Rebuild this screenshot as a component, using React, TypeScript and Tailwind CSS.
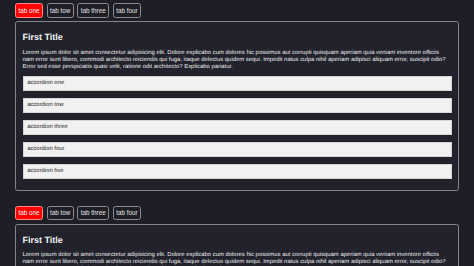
import React, { useState } from "react";

const tabs = ["tab one", "tab tow", "tab three", "tab four"];
const items = ["accordion one", "accordion tow", "accordion three", "accordion four", "accordion five"];

const lorem =
  "Lorem ipsum dolor sit amet consectetur adipisicing elit. Dolore explicabo cum dolores hic possimus aut corrupti quisquam aperiam quia veniam inventore officiis nam error sunt libero, commodi architecto reiciendis qui fuga, itaque delectus quidem sequi. Impedit natus culpa nihil aperiam adipisci aliquam error, suscipit odio? Error sed esse perspiciatis quasi velit, ratione odit architecto? Explicabo pariatur.";

const TabBlock: React.FC = () => {
  const [active, setActive] = useState(0);
  const [open, setOpen] = useState<number | null>(null);

  return (
    <div className="mb-[15px]">
      {/* tabs */}
      <div className="flex gap-[3.5px]">
        {tabs.map((t, i) => (
          <button
            key={t}
            onClick={() => setActive(i)}
            className={`rounded-[2.5px] border px-[2.5px] py-[2.6px] text-[6.3px] leading-[1.15] ${
              i === active
                ? "border-[#ff8a8a] bg-[#ff0000] text-[#f4f4f4]"
                : "border-[#8a8a90] bg-transparent text-[#e0e0e0]"
            }`}
          >
            {t}
          </button>
        ))}
      </div>

      {/* panel */}
      <div className="mt-[3.5px] rounded-[2.5px] border border-[#85868c] bg-[#21222b] px-[6.5px] pt-[10px] pb-[10.5px]">
        <h1 className="text-[9px] font-bold leading-[10px] text-[#f4f4f4]">First Title</h1>
        <p className="mt-[7.6px] text-[5.9px] leading-[7px] text-[#ececec]">{lorem}</p>
        <div className="mt-[5.4px] flex flex-col gap-[7px]">
          {items.map((it, i) => (
            <div key={it}>
              <div
                onClick={() => setOpen(open === i ? null : i)}
                className="flex h-[15px] items-center border border-[#d6d6d6] bg-[#f1f1f1] px-[3.7px] text-[5.9px] text-[#222]"
              >
                {it}
              </div>
            </div>
          ))}
        </div>
      </div>
    </div>
  );
};

export default function App() {
  return (
    <div
      className="min-h-screen bg-[#1e1f26] px-[15px] pt-[3.4px] [text-rendering:geometricPrecision]"
      style={{ fontFamily: '"Liberation Sans", Arial, sans-serif' }}
    >
      <TabBlock />
      <TabBlock />
    </div>
  );
}
